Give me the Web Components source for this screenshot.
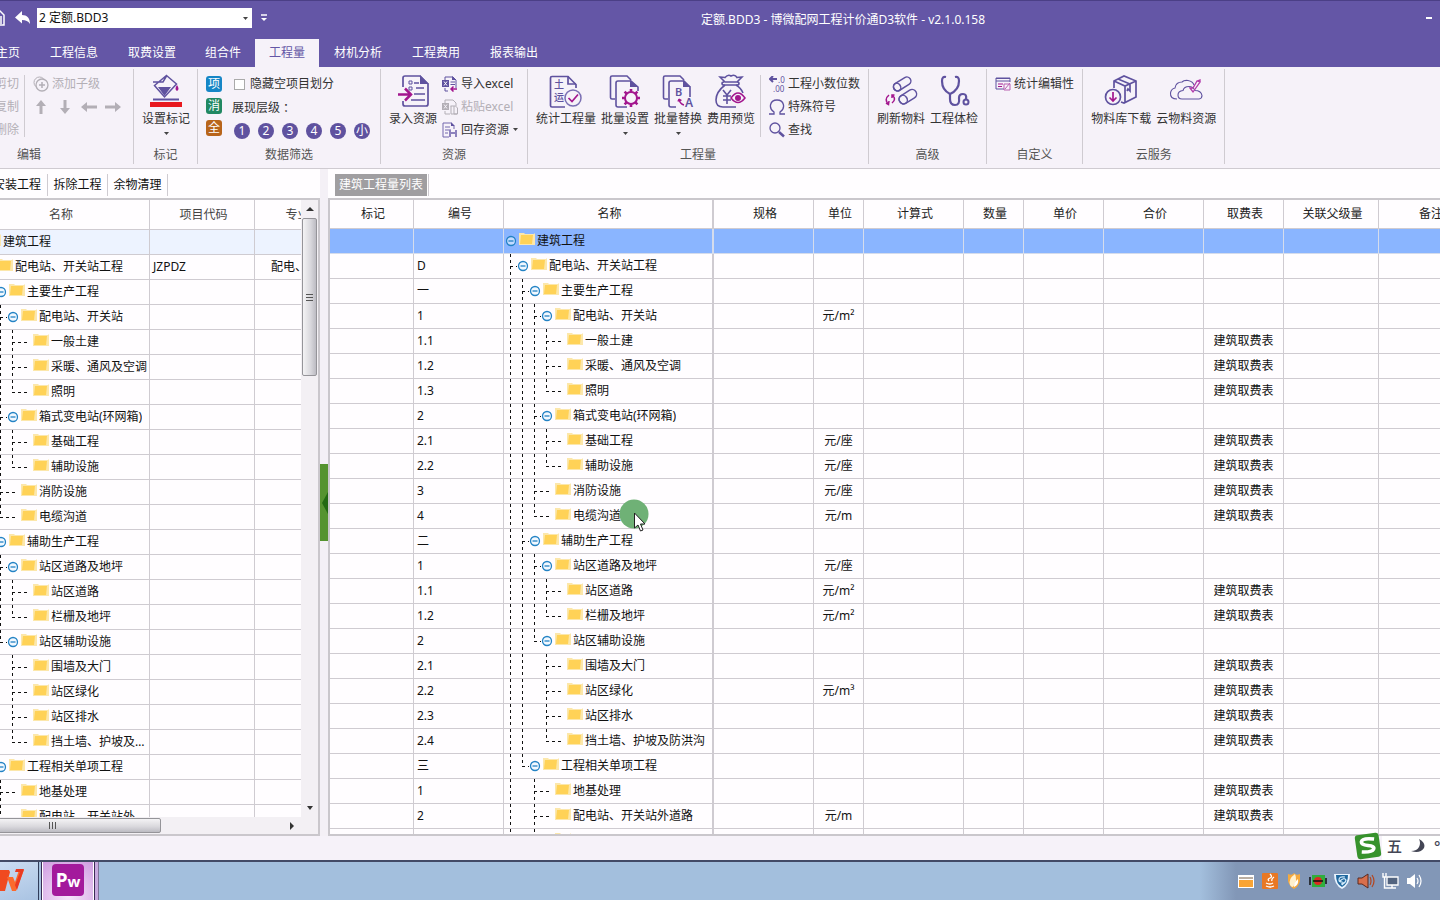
<!DOCTYPE html>
<html lang="zh-CN">
<head>
<meta charset="utf-8">
<title>定额.BDD3 - 博微配网工程计价通D3软件</title>
<style>
html,body{margin:0;height:100%}
body{font:12px/16px "Noto Sans","Noto Sans CJK SC",sans-serif;color:#111;background:#f6f2f9;overflow:hidden;
--purple:#6456a6;--ribbon:#f6f2f9;--line:#cfcbd1;--ink:#5f529f;--mag:#a3168e}
</style>
</head>
<body>
<cost-app></cost-app>
<script>
const define=(name,html,setup)=>{
  const t=document.createElement('template');t.innerHTML=html;
  customElements.define(name,class extends HTMLElement{
    connectedCallback(){
      if(this.shadowRoot)return;
      const r=this.attachShadow({mode:'open'});
      r.append(t.content.cloneNode(true));
      if(setup)setup(r,this);
    }
  });
};

/* ---------- icons: [width, height, markup] ---------- */
const P='#5f529f',M='#a3168e';
const ICONS={
home:[12,20,`<path d="M0 3h6l4 4v10H0M7 8v8" fill="none" stroke="#fff" stroke-width="1.5"/>`],
undo:[18,16,`<path d="M8 1L1 7.500l7 6V10c4 0 6 1 8 4 0-6-3-9-8-9z" fill="#fff"/>`],
custom:[8,8,`<path d="M1 1h6" stroke="#fff" stroke-width="1.500"/><path d="M1 4h6L4 7z" fill="#fff"/>`],
min:[8,4,`<path d="M1 1h6v2H1z" fill="#fff"/>`],
caret:[7,5,`<path d="M1 1h5L3.500 4z" fill="#444"/>`],
add:[16,16,`<g fill="none" stroke="#b3afb6"><circle cx="6.500" cy="6.500" r="5.500"/><circle cx="9" cy="9" r="6" fill="#f6f2f9" stroke-width="1.300"/><path d="M9 6v6M6 9h6" stroke-width="1.500"/></g>`],
up:[16,18,`<path d="M8 2l5 6H9.500v8h-3V8H3z" fill="#b3afb6"/>`],
down:[16,18,`<path d="M8 16l5-6H9.500V2h-3v8H3z" fill="#b3afb6"/>`],
left:[16,18,`<path d="M0 9l6-5v3.500h10v3H6V14z" fill="#b3afb6"/>`],
right:[16,18,`<path d="M16 9l-6-5v3.500H0v3h10V14z" fill="#b3afb6"/>`],
paint:[34,34,`<path d="M17.500 1.500l10 8.500L15.500 23 5.500 11.500zM4 8h10l3.500-6" fill="none" stroke="${P}" stroke-width="1.500"/><path d="M9 13h13l-6.500 9z" fill="${P}"/><path d="M28 11c2 3 2 5 0 6-2-1-2-3 0-6z" fill="${M}"/><path d="M4 24.500h26v2H4z" fill="${P}"/><path d="M1 28h32v5H1z" fill="#e8191f"/>`],
entry:[34,34,`<g fill="none" stroke="${P}" stroke-width="1.700"><path d="M7 13V4q0-2 2-2h15l8 8v20q0 2-2 2H9q-2 0-2-2v-3"/><path d="M18 9h5M20 14h8M18 20h11M15 26h14"/><path d="M13 7h3v3h-3zM13 13h3v3h-3z" stroke-width="1"/></g><path d="M24 1l9 9h-9z" fill="${P}"/><path d="M2 20.500h12M9 14.500l6 6-6 6" fill="none" stroke="${M}" stroke-width="2.500"/>`],
importx:[16,16,`<g fill="none" stroke="${P}"><path d="M3 4V1h8l3 3v8M3 12v3h3"/><path d="M8.500 6H13M8.500 8.500H13"/></g><path d="M10 0l4 4h-4z" fill="${P}"/><path d="M0 4h7v7H0z" fill="${P}"/><path d="M2 5.500l3 4M5 5.500l-3 4" stroke="#fff"/><path d="M15 13H9m2.500-2.500L9 13l2.500 2.500" stroke="${M}" stroke-width="1.500" fill="none"/>`],
pastex:[16,16,`<g fill="none" stroke="#b3afb6"><path d="M3 4V1h8l3 3v3M3 12v3h5"/><path d="M8.500 7H12v8h3.500V9l-2-2H12M9 7v8h6"/></g><path d="M0 4h7v7H0z" fill="#b3afb6"/><path d="M2 5.500l3 4M5 5.500l-3 4" stroke="#f6f2f9"/>`],
store:[16,16,`<g fill="none" stroke="#7266ad"><path d="M7 15H1V1h8l3 3v3"/><path d="M3 5h5M3 8h6M3 11h3"/></g><path d="M9 0l4 4H9z" fill="${P}"/><path d="M7 8h8v7H7z" fill="#8d82bd"/><path d="M9 8h4v2H9zM9 12h4v3H9z" fill="#f6f2f9"/>`],
stat:[34,34,`<path d="M16 33H3q-1.500 0-1.500-1.500V4Q1.500 2.500 3 2.500h16l8 8V14" fill="none" stroke="${P}" stroke-width="1.700"/><path d="M19 2v8h8" fill="none" stroke="${P}" stroke-width="1.700"/><g fill="${P}" font-family="Noto Sans CJK SC,sans-serif" font-weight="500" font-size="10"><text x="5" y="14">土</text><text x="5" y="27">运</text></g><circle cx="24" cy="24" r="8" fill="#f6f2f9" stroke="#7a6fb3" stroke-width="1.500"/><path d="M19.500 24l3.500 3.500 6-7" fill="none" stroke="${M}" stroke-width="1.700"/>`],
batchset:[34,34,`<g fill="none" stroke="${P}" stroke-width="1.600"><path d="M7 25H4q-1.500 0-1.500-1.500V3.500Q2.500 2 4 2h15l4 4"/><path d="M19 33H10q-2 0-2-2V9q0-2 2-2h13l7 6v4"/></g><path d="M22 6l8 7h-8z" fill="${P}"/><g fill="none" stroke="${M}"><circle cx="23" cy="24" r="6" stroke-width="2"/><path d="M23 15v3M23 30v3M14 24h3M29 24h3M16.600 17.600l2.200 2.200M27.200 28.200l2.200 2.200M16.600 30.400l2.200-2.200M27.200 19.800l2.200-2.200" stroke-width="2.600"/></g>`],
batchrep:[34,34,`<g fill="none" stroke="${P}" stroke-width="1.600"><path d="M7 25H4q-1.500 0-1.500-1.500V3.500Q2.500 2 4 2h15l4 4"/><path d="M15 33H10q-2 0-2-2V9q0-2 2-2h13l6 6v10"/></g><path d="M22 6l8 7h-8z" fill="${P}"/><g fill="${P}" font-family="Noto Sans,sans-serif" font-weight="600"><text x="14" y="22" font-size="11">B</text><text x="24" y="33" font-size="12">A</text></g><path d="M18 25q1 5 5 6m-5-6l-1 2.500m1-2.500l2.500 1.500" stroke="${M}" fill="none" stroke-width="1.400"/>`],
fee:[34,34,`<g fill="none" stroke="${P}" stroke-width="1.600"><path d="M11 8Q8 5 6 3q3 0 5 .500Q14 0 17 2q4-2 6 1.500 2-.500 5-.500-3 3-5 5zM10 8q-2 0-2 1.500T10 11h13q2 0 2-1.500T23 8"/><path d="M11 11Q2 18 2 26q0 7 7 7h13M22 11q5 3 7 8"/><path d="M9 16l4 5 4-5M13 21v9M9 22h8M9 26h8"/></g><path d="M17 24q7-10 14 0-7 9-14 0z" fill="#f6f2f9" stroke="${M}" stroke-width="1.500"/><circle cx="24" cy="24" r="3" fill="${M}"/>`],
decimal:[16,16,`<path d="M1 3h7M4 0L1 3l3 3" stroke="${P}" stroke-width="2" fill="none"/><g fill="${P}" font-family="Noto Sans,sans-serif" font-size="8"><text x="9" y="7">.0</text><text x="4" y="16">.00</text></g>`],
omega:[16,16,`<path d="M0 15h5v-2C-1 9 1 1 8 1s9 8 3 12v2h5" fill="none" stroke="${P}" stroke-width="1.300"/>`],
find:[16,16,`<circle cx="6" cy="6" r="5" fill="none" stroke="${P}" stroke-width="1.300"/><path d="M10 10l5 4.500" stroke="${P}" stroke-width="2.500"/>`],
refresh:[34,34,`<g fill="none" stroke="${P}" stroke-width="1.500"><g transform="rotate(-32 20 10)"><rect x="9" y="5" width="19" height="8" rx="4"/><ellipse cx="12.500" cy="9" rx="3.500" ry="4"/></g><g transform="rotate(-32 24 22)"><rect x="14" y="18" width="19" height="9" rx="4.500"/><ellipse cx="18" cy="22.500" rx="4" ry="4.500"/></g></g><path d="M5 21q-5 4-1 9m-2-1l2.500 1.500L5 27M8 29q5-4 0-8m2.500 0H8v3" fill="none" stroke="${M}" stroke-width="1.500"/>`],
check:[34,34,`<g fill="none" stroke="${P}" stroke-width="2.200"><path d="M9 3Q5 2 5 7q0 9 8 13Q22 16 22 7q0-5-4-4"/><path d="M13 20v5q0 6 5 6t4-7q0-4 4-4t3 5v3"/></g><circle cx="29" cy="28" r="2.500" fill="#f6f2f9" stroke="${P}" stroke-width="2"/>`],
editable:[16,16,`<path d="M9 13H1V2h14v4M1 5h14" fill="none" stroke="${P}"/><path d="M1 2h14v1H1z" fill="${P}"/><path d="M3 8h5M3 10.500h4" stroke="${M}"/><path d="M9 8h6v6H9zM10 13l5-6" fill="none" stroke="#b760b0"/>`],
download:[34,34,`<g fill="none" stroke="${P}" stroke-width="1.700"><path d="M10 14V7l10-5 12 5v16l-12 6-3-1M10 7l11 5 11-5M21 12v17M14 5l12 5v7l-2-2-1 2"/><circle cx="9" cy="23" r="7.500" fill="#f6f2f9"/></g><path d="M9 18v9m-3.500-3.500L9 27l3.500-3.500" fill="none" stroke="${M}" stroke-width="1.700"/>`],
cloud:[34,34,`<g fill="none" stroke="${P}" stroke-width="1.100"><path d="M8 25Q1 25 1.500 19 2 15 6 14 7 8 13 8q2-2 6-1.500 5 1 6 4.500"/><path d="M13 25q-4 0-4-4t5-4.500q1-4 6-4 4 0 6 4 6 0 7 5 0 3-3 3.500z"/></g><path d="M21 14l3 4 7-10-3-1-4 7zM28 7l3-1v2" fill="none" stroke="#b23bab" stroke-width="1.300"/>`],
folder:[17,14,`<path d="M0 1h5l1 1h9l1-1v12H0z" fill="#fce7ab"/><path d="M2 3h12l-1 9H1z" fill="#ffd257"/>`],
minus:[12,12,`<circle cx="6" cy="6" r="4.500" fill="#e9f5ff" fill-opacity=".6" stroke="#2483c5" stroke-width="1.300"/><path d="M3.500 6h5" stroke="#2483c5" stroke-width="1.300"/>`],
sogou:[28,28,`<g transform="rotate(-8 14 14)"><rect x="2" y="2" width="24" height="24" rx="3" fill="#37922c"/><path d="M21 8q-12-3-13 1-.500 3 6 4.500Q21 15 19 18q-2 3-12 1" fill="none" stroke="#fff" stroke-width="3.600"/></g>`],
moon:[14,14,`<path d="M8 0q7 4 5 9-4 6-13 3 6 0 8-4t0-8z" fill="#444655"/>`],
wps:[26,26,`<path d="M0 2h9l1 2-5 19H0z" fill="#f04a20"/><path d="M7 9l5 14h4L24 2h-5l-4 12-2-5z" fill="#fb6a2c"/><path d="M24 1h-8l-1 3h5l-5 13 2 5z" fill="#e93a22"/>`],
t1:[18,18,`<path d="M1 3h16v13H1z" fill="#fff"/><path d="M2 8h14v7H2z" fill="#f9a435"/><path d="M2 6h14" stroke="#775f45"/>`],
t2:[18,18,`<rect x="1" y="1" width="16" height="16" rx="1" fill="#e87824"/><path d="M5 11q4 2 7 0M5 14q4 2 8 0M8 9q-2-2 1-3t0-4m2 7q-1-2 2-4" stroke="#fff" fill="none" stroke-width="1.300"/>`],
t3:[18,18,`<path d="M3 2q4 2 6-1 2 3 6 1v7q-1 5-6 8-5-3-6-8z" fill="#f5a93d"/><path d="M10 2Q3 7 5 13q1 2 3 2 5-6 2-13z" fill="#fff0cd"/><path d="M13 7q-4 3-4 8 5-2 4-8z" fill="#fff"/>`],
t4:[18,18,`<rect x="3" y="3" width="13" height="12" fill="#2fae3d"/><circle cx="9" cy="9" r="4" fill="#db2b21"/><path d="M1 5v8M17 6v6M4 9h10" stroke="#111" stroke-width="1.500"/>`],
t5:[18,18,`<path d="M1 2h16q0 11-8 15Q1 13 1 2z" fill="#e9f4ff"/><path d="M3 3h12q0 9-6 12-6-3-6-12z" fill="#1f689f"/><path d="M12 5q-6-1-6 3 0 2 3 2 3 1 0 3M7 9q4-4 6-1-1 4-5 4" fill="none" stroke="#d6ecfb" stroke-width="1.200"/>`],
t6:[18,18,`<path d="M1 6h4l6-4v14l-6-4H1z" fill="#d86f4c" stroke="#5a2a20"/><path d="M13 5q2 4 0 8M15 3q4 6 0 12" fill="none" stroke="#b4451f" stroke-width="1.200"/>`],
t7:[18,18,`<path d="M6 5h11v8H6z" fill="#53647f" stroke="#fff" stroke-width="1.300"/><path d="M8 16h7M11 13v3M2 1v4h3V1M3.500 5v11H8" fill="none" stroke="#fff" stroke-width="1.400"/>`],
t8:[18,18,`<path d="M2 6h3l5-4v14l-5-4H2z" fill="#fff"/><path d="M12 6q2 3 0 6M14 3q4 6 0 12" fill="none" stroke="#fff" stroke-width="1.200"/>`]
};
define('ui-icon','<style>:host{display:inline-flex;flex:none}svg{display:block}</style>',(r,e)=>{
  const[w,h,b]=ICONS[e.getAttribute('name')];
  const t=document.createElement('template');
  t.innerHTML=`<svg width="${w}" height="${h}" viewBox="0 0 ${w} ${h}" aria-hidden="true">${b}</svg>`;
  r.append(t.content);
});

/* ---------- title bar ---------- */
define('title-bar',`<style>
:host{display:flex;align-items:center;height:33px;border-top:1px solid #4b3f86;background:var(--purple);color:#fff;flex:none}
.quick{display:flex;align-items:center}
button{border:0;background:none;padding:0;display:flex}
.home{margin-left:-6px;margin-right:8px}
.undo{margin-right:5px}
.box{position:relative;display:flex;margin-right:8px}
select{appearance:none;width:215px;height:20px;border:0;border-radius:0;background:#fff;color:#111;font:inherit;padding:0 16px 0 2px}
.box ui-icon{position:absolute;right:3px;top:8px;pointer-events:none}
h1{flex:1;margin:0;padding-top:4px;text-align:center;font:inherit}
.win{width:22px;display:flex;justify-content:center}
</style>
<div class="quick"><button class="home" aria-label="主页"><ui-icon name="home"></ui-icon></button>
<button class="undo" aria-label="撤销"><ui-icon name="undo"></ui-icon></button>
<span class="box"><select aria-label="文件"><option>2 定额.BDD3</option></select><ui-icon name="caret"></ui-icon></span>
<button aria-label="自定义"><ui-icon name="custom"></ui-icon></button></div>
<h1>定额.BDD3 - 博微配网工程计价通D3软件 - v2.1.0.158</h1>
<div class="win"><button aria-label="最小化"><ui-icon name="min"></ui-icon></button></div>`);

/* ---------- ribbon tabs ---------- */
define('ribbon-tabs',`<style>
:host{display:flex;align-items:flex-end;height:33px;background:var(--purple);flex:none}
nav{display:flex;margin-left:-19px}
button{width:78px;height:28px;border:0;background:none;color:#fff;font:inherit;padding:0}
.w2{width:54px}.w3{width:64px}
[aria-current]{background:var(--ribbon);color:var(--purple)}
</style><nav></nav>`,r=>{
  r.querySelector('nav').innerHTML=['主页','工程信息','取费设置','组合件','工程量','材机分析','工程费用','报表输出']
    .map(t=>`<button class="w${t.length}"${t==='工程量'?' aria-current="page"':''}>${t}</button>`).join('');
});

/* ---------- ribbon building blocks ---------- */
define('ribbon-group',`<style>
:host{display:flex;flex-direction:column;height:95px;margin-top:2px;border-right:1px solid var(--line);flex:none}
.body{display:flex;gap:5px;height:77px;padding:0 8px}
.label{text-align:center;color:#555;line-height:18px}
</style><div class="body"><slot></slot></div><div class="label"></div>`,(r,e)=>{
  r.querySelector('.label').textContent=e.getAttribute('label');
});
define('big-tool',`<style>
:host{display:block}
button{display:flex;flex-direction:column;align-items:center;border:0;background:none;padding:5px 0 0;font:inherit;line-height:20px;color:#333;white-space:nowrap}
span{padding-top:1px}
.drop{padding-top:2px}
</style><button></button>`,(r,e)=>{
  r.querySelector('button').innerHTML=`<ui-icon name="${e.getAttribute('icon')}"></ui-icon><span>${e.getAttribute('label')}</span>${e.hasAttribute('drop')?'<ui-icon class="drop" name="caret"></ui-icon>':''}`;
});
define('small-tool',`<style>
:host{display:block}
button{display:flex;align-items:center;gap:3px;height:23px;border:0;background:none;padding:0;font:inherit;color:#333;white-space:nowrap}
:host([off]) button{color:#b3afb6}
</style><button></button>`,(r,e)=>{
  const i=e.getAttribute('icon');
  r.querySelector('button').innerHTML=`${i?`<ui-icon name="${i}"></ui-icon>`:''}<span>${e.getAttribute('label')}</span>${e.hasAttribute('drop')?'<ui-icon name="caret"></ui-icon>':''}`;
});
define('level-filter',`<style>
:host{display:flex;gap:10px;padding-top:3px}
.tags{display:flex;flex-direction:column;gap:6px;padding-top:4px}
button{border:0;padding:0;color:#fff;font:inherit;width:16px;height:16px;line-height:16px;text-align:center}
.tags button{border-radius:3px}
.a{background:#1686c6}.b{background:#218862}.c{background:#b8651b}
.rows>*{display:flex;align-items:center;height:24px;color:#333}
input{margin:0 5px 0 2px;width:11px;height:11px;appearance:none;border:1px solid #aaa;background:#fff}
.colon{font-family:"Noto Sans CJK TC",sans-serif}
.rows .lv{gap:8px;padding-left:2px;height:22px}
.lv button{border-radius:50%;background:var(--ink)}
</style><div class="tags"><button class="a">项</button><button class="b">消</button><button class="c">全</button></div>
<div class="rows"><label><input type="checkbox">隐藏空项目划分</label><div>展现层级<span class="colon" lang="zh-TW">：</span></div>
<div class="lv"><button>1</button><button>2</button><button>3</button><button>4</button><button>5</button><button>小</button></div></div>`);

define('ribbon-bar',`<style>
:host{display:flex;height:101px;border-bottom:1px solid var(--line);background:var(--ribbon);flex:none;overflow:hidden}
.edit{width:208px;margin-left:-75px}
.mark{width:63px}.filter{width:182px}.res{width:146px}
.col{padding-top:3px}
.clip{width:86px;display:flex;flex-direction:column;align-items:flex-end}
.sep{width:1px;height:62px;margin-top:6px;background:var(--line)}
.tree{padding:3px 0 0 3px}
.arrows{display:flex;gap:8px;height:23px;align-items:center}
.arrows button{border:0;padding:0;background:none;display:flex}
.more{padding:3px 0 0 3px}
</style>
<ribbon-group class="edit" label="编辑">
<div class="col clip"><small-tool off label="剪切"></small-tool><small-tool off label="复制"></small-tool><small-tool off label="删除"></small-tool></div>
<div class="sep"></div>
<div class="tree"><small-tool off icon="add" label="添加子级"></small-tool><div class="arrows">
<button aria-label="上移"><ui-icon name="up"></ui-icon></button><button aria-label="下移"><ui-icon name="down"></ui-icon></button><button aria-label="升级"><ui-icon name="left"></ui-icon></button><button aria-label="降级"><ui-icon name="right"></ui-icon></button></div></div>
</ribbon-group>
<ribbon-group class="mark" label="标记"><big-tool icon="paint" label="设置标记" drop></big-tool></ribbon-group>
<ribbon-group class="filter" label="数据筛选"><level-filter></level-filter></ribbon-group>
<ribbon-group class="res" label="资源"><big-tool icon="entry" label="录入资源"></big-tool>
<div class="col"><small-tool icon="importx" label="导入excel"></small-tool><small-tool off icon="pastex" label="粘贴excel"></small-tool><small-tool icon="store" label="回存资源" drop></small-tool></div></ribbon-group>
<ribbon-group label="工程量"><big-tool icon="stat" label="统计工程量"></big-tool><big-tool icon="batchset" label="批量设置" drop></big-tool><big-tool icon="batchrep" label="批量替换" drop></big-tool><big-tool icon="fee" label="费用预览"></big-tool>
<div class="sep"></div><div class="more"><small-tool icon="decimal" label="工程小数位数"></small-tool><small-tool icon="omega" label="特殊符号"></small-tool><small-tool icon="find" label="查找"></small-tool></div></ribbon-group>
<ribbon-group label="高级"><big-tool icon="refresh" label="刷新物料"></big-tool><big-tool icon="check" label="工程体检"></big-tool></ribbon-group>
<ribbon-group label="自定义"><div class="col"><small-tool icon="editable" label="统计编辑性"></small-tool></div></ribbon-group>
<ribbon-group label="云服务"><big-tool icon="download" label="物料库下载"></big-tool><big-tool icon="cloud" label="云物料资源"></big-tool></ribbon-group>`);

/* ---------- project tree data: level, number, name, unit, fee table ---------- */
const F='建筑取费表';
const ROWS=[[0,'','建筑工程'],[1,'D','配电站、开关站工程'],[2,'一','主要生产工程'],[3,'1','配电站、开关站','元/m²'],
[4,'1.1','一般土建','',F],[4,'1.2','采暖、通风及空调','',F],[4,'1.3','照明','',F],[3,'2','箱式变电站(环网箱)'],
[4,'2.1','基础工程','元/座',F],[4,'2.2','辅助设施','元/座',F],[3,'3','消防设施','元/座',F],[3,'4','电缆沟道','元/m',F],
[2,'二','辅助生产工程'],[3,'1','站区道路及地坪','元/座'],[4,'1.1','站区道路','元/m²',F],[4,'1.2','栏栅及地坪','元/m²',F],
[3,'2','站区辅助设施'],[4,'2.1','围墙及大门','',F],[4,'2.2','站区绿化','元/m³',F],[4,'2.3','站区排水','',F],
[4,'2.4','挡土墙、护坡及防洪沟','',F],[2,'三','工程相关单项工程'],[3,'1','地基处理','',F],[3,'2','配电站、开关站外道路','元/m',F],[3,'','']];
const LEVELS=ROWS.map(r=>r[0]).concat(3,1);
const continues=(i,k)=>{ /* is there a later sibling on branch k below row i */
  for(let j=i+1;j<LEVELS.length;j++){if(LEVELS[j]===k+1)return true;if(LEVELS[j]<=k)return false}
  return false;
};
const treeCell=(i)=>{
  const [l,,name]=ROWS[i],parent=LEVELS[i+1]>l,w=12*l+(parent?2:15);
  let p='';
  for(let k=0;k<l;k++){
    const x=12*k+6.5,c=continues(i,k);
    if(c)p+=`M${x} 0V25`;else if(k===l-1)p+=`M${x} 0V13`;
  }
  if(l)p+=`M${12*l-6} 12.5H${parent?12*l+1:12*l+9}`;
  return `<div class="node"><svg width="${w}" height="25" viewBox="0 0 ${w} 25" aria-hidden="true"><path d="${p}" fill="none" stroke="#111" stroke-dasharray="3 3"/></svg>${parent?'<button aria-label="折叠"><ui-icon name="minus"></ui-icon></button>':''}<ui-icon class="f" name="folder"></ui-icon><span>${name}</span></div>`;
};

define('tree-grid',`<style>
:host{display:block;overflow:hidden;background:#fffdff;min-width:0;min-height:0}
table{table-layout:fixed;border-collapse:separate;border-spacing:0}
th,td{box-sizing:border-box;height:25px;padding:0;border-right:1px solid var(--line);border-bottom:1px solid var(--line);font-weight:400;text-align:center;white-space:nowrap;overflow:hidden;line-height:24px}
th{height:29px;line-height:28px;color:#222;padding-left:3px}
.code,.key{text-align:left;padding-left:3px}
.major{text-align:left;padding-left:16px}
.node{display:flex;align-items:center;height:24px}
.node svg{flex:none;display:block;height:25px}
.node button{border:0;padding:0;background:none;display:flex;margin:0 1px 0 -1px}
.node .f{margin-bottom:4px}
.node button+.f{margin-left:1px}
.node span{overflow:hidden;text-overflow:ellipsis;padding-left:1px}
.sel td{background:#8ab5ff;border-color:#d5dcec}
:host([kind=project]) table{margin-left:-30px}
:host([kind=project]) th{height:30px;line-height:29px;color:#444}
:host([kind=project]) .sel td{background:#edf3ff;border-color:var(--line)}
:host([kind=quantity]) th:nth-child(3),:host([kind=quantity]) td:nth-child(3){border-right-width:2px}
</style><table><colgroup></colgroup><thead><tr></tr></thead><tbody></tbody></table>`,(r,e)=>{
  const project=e.getAttribute('kind')==='project';
  const cols=project?[['名称',180],['项目代码',105],['专业',83]]:
    [['标记',84],['编号',90],['名称',210],['规格',100],['单位',50],['计算式',100],['数量',60],['单价',80],['合价',100],['取费表',80],['关联父级量',95],['备注',102]];
  r.querySelector('table').style.width=cols.reduce((s,c)=>s+c[1],0)+'px';
  r.querySelector('colgroup').innerHTML=cols.map(c=>`<col style="width:${c[1]}px">`).join('');
  r.querySelector('thead tr').innerHTML=cols.map(c=>`<th scope="col">${c[0]}</th>`).join('');
  r.querySelector('tbody').innerHTML=ROWS.map((d,i)=>{
    const [l,code,,unit='',fee='']=d;
    const cells=project?`<td>${treeCell(i)}</td><td class="key">${l===1?'JZPDZ':''}</td><td class="major">${l===1?'配电、':''}</td>`
      :`<td></td><td class="code">${code}</td><td>${treeCell(i)}</td><td></td><td>${unit}</td><td></td><td></td><td></td><td></td><td>${fee}</td><td></td><td></td>`;
    return `<tr${i?'':' class="sel"'}>${cells}</tr>`;
  }).join('');
});

/* ---------- scroll bars ---------- */
define('scroll-track',`<style>
:host{display:flex;box-sizing:border-box;background:#f3f0f4;flex:none}
:host([dir=v]){flex-direction:column;width:17px;align-items:center}
:host([dir=h]){height:17px;align-items:center}
.thumb{box-sizing:border-box;border:1px solid #959499;border-radius:2px;display:flex;align-items:center;justify-content:center}
:host([dir=v]) .thumb{width:15px;height:158px;background:linear-gradient(90deg,#f4f3f5,#d8d7dc 60%,#bcbbc2)}
:host([dir=h]) .thumb{width:217px;margin-left:-56px;height:15px;background:linear-gradient(#f4f3f5,#d8d7dc 60%,#bcbbc2)}
.space{flex:1}
svg{display:block;flex:none}
.arrow{flex:none;display:flex;align-items:center;justify-content:center}
:host([dir=v]) .arrow{height:18px}
:host([dir=h]) .arrow{width:18px;margin-right:17px}
</style>`,(r,e)=>{
  const v=e.getAttribute('dir')==='v';
  const a=d=>`<span class="arrow"><svg width="8" height="8" viewBox="0 0 8 8"><path d="${d}" fill="#333"/></svg></span>`;
  const grip=`<svg width="9" height="9" viewBox="0 0 9 9"><path d="${v?'M1 1.5h7M1 4.500h7M1 7.500h7':'M1.500 1v7M4.500 1v7M7.500 1v7'}" stroke="#555"/></svg>`;
  r.innerHTML+=(v?a('M4 2l4 4H0z'):'')+`<div class="thumb">${grip}</div><div class="space"></div>`+a(v?'M4 6l3-4H1z':'M6 4L2 0v8z');
});

/* ---------- work area panes ---------- */
define('project-pane',`<style>
:host{display:flex;flex-direction:column;width:320px;flex:none;min-height:0;overflow:hidden}
nav{display:flex;height:29px;align-items:center;background:#fffdff;margin-left:-13px;flex:none}
nav button{width:61px;height:22px;padding:0;border:0;border-right:1px solid var(--line);background:none;font:inherit;margin-top:2px;color:#111}
nav button+button{width:60px}
.frame{flex:1;display:flex;flex-direction:column;border:2px solid #cac7cc;border-left:0;min-height:0}
.view{flex:1;display:flex;min-height:0}
tree-grid{flex:1}
</style><nav><button>安装工程</button><button>拆除工程</button><button>余物清理</button></nav>
<div class="frame"><div class="view"><tree-grid kind="project"></tree-grid><scroll-track dir="v"></scroll-track></div><scroll-track dir="h"></scroll-track></div>`);

define('pane-splitter',`<style>
:host{display:flex;align-items:center;width:8px;flex:none;background:#f4f0f6}
button{width:8px;height:77px;padding:0;border:0;background:#55932f;display:flex;align-items:center;justify-content:flex-end}
</style><button aria-label="收起"><svg width="7" height="22" viewBox="0 0 7 22"><path d="M7 0v22L1 11z" fill="#236a12"/></svg></button>`);

define('quantity-pane',`<style>
:host{display:flex;flex-direction:column;flex:1;min-width:0;min-height:0}
nav{display:flex;height:29px;align-items:center;background:#fffdff;padding-left:7px;flex:none}
button{height:22px;padding:0 4px;border:0;background:#a09ea1;color:#fff;font:inherit;margin-top:2px;box-shadow:1px 0 #fff,2px 0 var(--line)}
tree-grid{flex:1;border:2px solid #cac7cc;border-right:0}
</style><nav><button>建筑工程量列表</button></nav><tree-grid kind="quantity"></tree-grid>`);

define('status-bar',`<style>
:host{display:flex;justify-content:flex-end;height:24px;flex:none;background:#f6f2f9}
.ime{display:flex;align-items:center;height:20px;position:relative}
.ime b{font-size:15px;color:#444655;font-weight:500}
.tools{box-sizing:border-box;display:flex;align-items:center;gap:9px;height:24px;padding:0 0 4px 5px;margin-top:4px;background:#fff;width:58px}
</style><div class="ime"><ui-icon name="sogou"></ui-icon><div class="tools"><b>五</b><ui-icon name="moon"></ui-icon><b>°</b></div></div>`);

define('task-bar',`<style>
:host{display:flex;height:38px;border-top:2px solid #424a66;background:#a3bfdd;flex:none}
button{border:0;padding:0;display:flex;align-items:center;justify-content:center;font:inherit}
.wps{width:39px;justify-content:flex-start;background:linear-gradient(160deg,#cbdcf2,#a9c3e2);border-right:1px solid #2f3c5a;margin-right:2px}
.pw{box-sizing:border-box;width:54px;padding-bottom:2px;background:radial-gradient(circle at 50% 90%,#f6e6fb,#cf9be0);border:1px solid #3a2a55;border-width:0 1px;box-shadow:inset 1px 0 #fff,inset -1px 0 #fff,3px 0 #c7a8dd,4px 0 #7c7298}
.pw span{width:32px;height:32px;border-radius:4px;background:#a31a9c;color:#fff;font:700 19px/32px "Noto Sans",sans-serif;text-align:center}
.pw small{font-size:15px}
.space{flex:1}
.tray{display:flex;align-items:center;gap:6px;padding:0 17px 0 37px;background:linear-gradient(90deg,#a3bfdd,#8297b7 36px)}
</style><button class="wps" aria-label="WPS"><ui-icon name="wps"></ui-icon></button><button class="pw"><span>P<small>w</small></span></button>
<div class="space"></div><div class="tray"></div>`,r=>{
  r.querySelector('.tray').innerHTML=[1,2,3,4,5,6,7,8].map(n=>`<ui-icon name="t${n}"></ui-icon>`).join('');
});

define('click-pointer',`<style>
:host{position:absolute;left:619px;top:499px;pointer-events:none}
svg{display:block}
</style><svg width="34" height="36" viewBox="0 0 34 36"><circle cx="15" cy="15" r="14.500" fill="#6fb176"/><path d="M15.500 14v15l3.500-3 2.500 6 2.500-1-2.500-6h4.500z" fill="#fff" stroke="#222"/></svg>`);

define('cost-app',`<style>
:host{display:flex;flex-direction:column;height:100vh;position:relative;overflow:hidden}
main{flex:1;display:flex;min-height:0}
</style><title-bar></title-bar><ribbon-tabs></ribbon-tabs><ribbon-bar></ribbon-bar>
<main><project-pane></project-pane><pane-splitter></pane-splitter><quantity-pane></quantity-pane></main>
<status-bar></status-bar><task-bar></task-bar><click-pointer></click-pointer>`);
</script>
</body>
</html>
